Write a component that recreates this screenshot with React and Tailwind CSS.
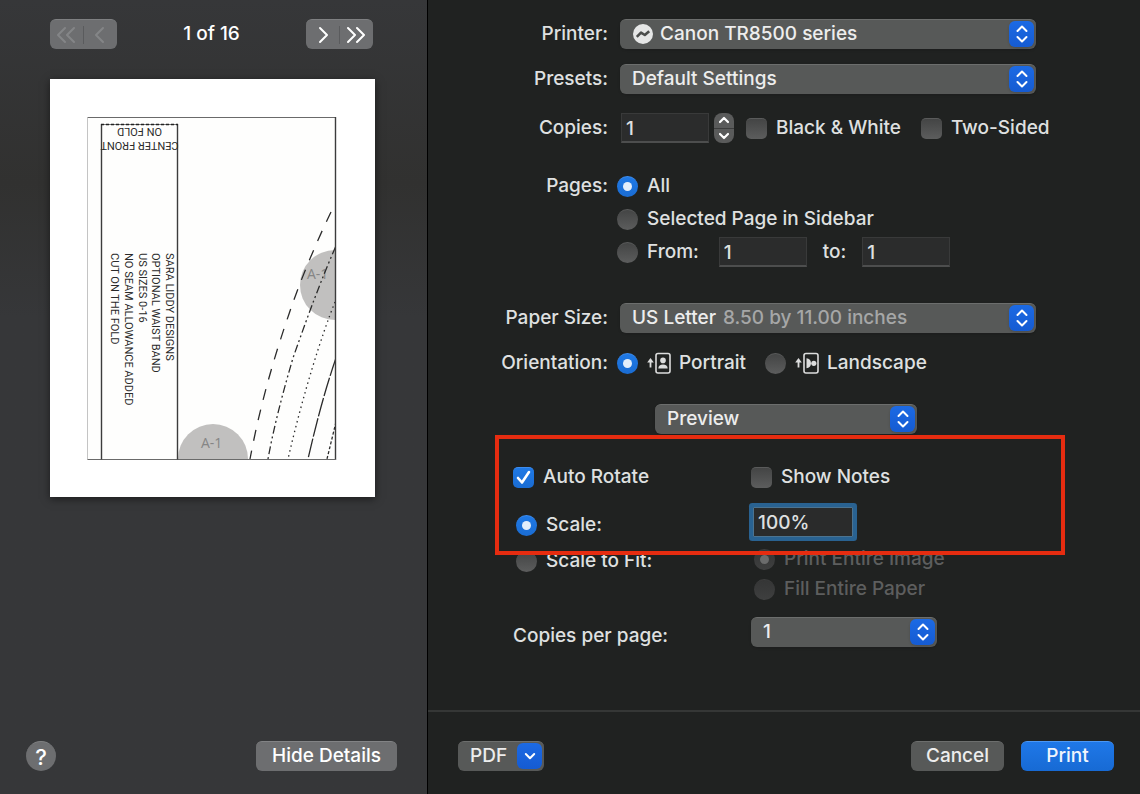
import { useState } from 'react';

function UpDownChip() {
    return (
        <span className="pointer-events-none absolute top-0.5 right-0.5 bottom-0.5 flex w-[25px] items-center justify-center rounded-md bg-linear-to-b from-[#1c6ae4] to-[#155bd2] shadow-sm">
            <svg width="14" height="20" viewBox="0 0 14 20" fill="none" stroke="#fff" strokeWidth="2" strokeLinecap="round" strokeLinejoin="round">
                <path d="M2.5 7 L7 2.5 L11.5 7" />
                <path d="M2.5 13 L7 17.5 L11.5 13" />
            </svg>
        </span>
    );
}

// Native select with the blue chevron chip drawn on top
function PopUp({ id, label, options, className, pad = 'pl-3', children }) {
    return (
        <div className={`relative h-[30px] ${className}`}>
            <select
                id={id}
                aria-label={label}
                className={`h-full w-full appearance-none rounded-md border-t border-[#6c6e6d] bg-[#575958] pb-0.5 ${pad} pr-8 text-[#ededed] shadow outline-none`}
            >
                {options.map((option) => (
                    <option key={option}>{option}</option>
                ))}
            </select>
            {children}
            <UpDownChip />
        </div>
    );
}

function Radio({ name, checked, onChange, disabled, children }) {
    return (
        <label className={`flex h-[30px] items-center gap-[9px] whitespace-nowrap ${disabled ? 'text-[#5d5e5e]' : ''}`}>
            <span className="relative flex size-[21px] shrink-0">
                <input
                    type="radio"
                    name={name}
                    checked={checked}
                    onChange={onChange}
                    disabled={disabled}
                    className="size-[21px] appearance-none rounded-full border-t border-[#5a5b5b] bg-linear-to-b from-[#444545] to-[#5c5d5d] checked:border-[#3d8df0] checked:from-[#1f79e6] checked:to-[#1a6cd2] disabled:border-[#3c3d3d] disabled:from-[#353636] disabled:to-[#3e3f3f]"
                />
                {checked && (
                    <span className={`pointer-events-none absolute inset-0 m-auto size-[9px] rounded-full ${disabled ? 'bg-[#6b6c6c]' : 'bg-[#e3eefb]'}`} />
                )}
            </span>
            {children}
        </label>
    );
}

function Checkbox({ checked, onChange, children }) {
    return (
        <label className="flex h-[30px] items-center gap-[9px] whitespace-nowrap">
            <span className="relative flex size-[21px] shrink-0">
                <input
                    type="checkbox"
                    checked={checked}
                    onChange={onChange}
                    className="size-[21px] appearance-none rounded-[5px] border-t border-[#5a5b5b] bg-linear-to-b from-[#444545] to-[#5c5d5d] checked:border-[#3d8df0] checked:from-[#1f79e6] checked:to-[#1a6cd2]"
                />
                {checked && (
                    <svg className="pointer-events-none absolute inset-0" width="21" height="21" viewBox="0 0 21 21" fill="none" stroke="#fff" strokeWidth="2.6" strokeLinecap="round" strokeLinejoin="round">
                        <path d="M5 11 L9 15.5 L16 5" />
                    </svg>
                )}
            </span>
            {children}
        </label>
    );
}

function NumberField({ label, id }) {
    return (
        <input
            id={id}
            aria-label={label}
            type="text"
            defaultValue="1"
            className="h-[30px] w-[88px] border border-b-2 border-[#393a3a] border-b-[#4d4e4e] bg-[#2b2c2c] px-1 pt-0.5 outline-none"
        />
    );
}

function RowLabel({ htmlFor, children }) {
    return (
        <label htmlFor={htmlFor} className="w-[180px] shrink-0 text-right whitespace-nowrap">
            {children}
        </label>
    );
}

// Sheet icon with an arrow for the feed direction
function SheetIcon({ landscape }) {
    return (
        <svg width="24" height="24" viewBox="0 0 24 24" fill="none" stroke="#dcdddd" className="-mr-px shrink-0">
            <path d="M3.5 16.5 V9.5" strokeWidth="1.8" />
            <path d="M0.2 11.4 L3.5 7 L6.8 11.4 Z" fill="#dcdddd" stroke="none" />
            <rect x="9" y="2.5" width="14" height="19.5" rx="2" strokeWidth="1.6" />
            {landscape ? (
                <g fill="#dcdddd" stroke="none">
                    <path d="M11.5 7.3 C14.3 7.5 16 9.5 16 12.3 C16 15.1 14.3 17.1 11.5 17.3 Z" />
                    <circle cx="18.8" cy="12.3" r="2.6" />
                </g>
            ) : (
                <g fill="#dcdddd" stroke="none">
                    <circle cx="16" cy="9.4" r="2.8" />
                    <path d="M11.3 17.5 C11.3 14.8 13.3 13.4 16 13.4 C18.7 13.4 20.7 14.8 20.7 17.5 Z" />
                </g>
            )}
        </svg>
    );
}

function PagePreview() {
    return (
        <svg viewBox="0 0 325 418" className="block w-full bg-white font-normal shadow-[0_2px_8px_rgba(0,0,0,0.5)]" role="img" aria-label="Page 1 preview">
            <defs>
                <clipPath id="frame">
                    <rect x="37" y="38" width="248.5" height="342.5" />
                </clipPath>
            </defs>
            <rect x="38" y="39" width="248" height="341.5" fill="#fefefd" />
            <g clipPath="url(#frame)" fill="#c1c0bf">
                <circle cx="285" cy="206" r="35" />
                <circle cx="163" cy="380" r="35" />
            </g>
            <g fontFamily="'Open Sans', sans-serif" fontSize="14" fill="#858585">
                <text x="151" y="369">A-1</text>
                <text x="257" y="200">A-1</text>
            </g>

            {/* cutting lines, one dash style per size */}
            <g clipPath="url(#frame)" fill="none" stroke="#2b2b2b" strokeWidth="1.3">
                <path d="M281 133 C266 164 250 202 239 235 C222 284 209 332 200 380" strokeDasharray="11 10" />
                <path d="M285.5 168 C271 201 257 239 243 279 C233 313 224 347 218 380" strokeDasharray="8 3 2 3 2 3" />
                <path d="M285 223 C272 255 253 315 238 380" strokeDasharray="1.5 3.5" />
                <path d="M286 279 C275 311 266 345 258 380" strokeDasharray="19 2" />
                <path d="M286 343 L277 380" strokeDasharray="3 2" />
            </g>

            <g fill="none" stroke="#3c3c3c">
                <path d="M37.5 39 V380.5" stroke="#c4c4c4" strokeWidth="1" />
                <path d="M37.5 38.5 H285.5" stroke="#6a6a6a" strokeWidth="1" />
                <path d="M285.5 38 V381" strokeWidth="1.4" />
                <path d="M37.5 380.5 H286" stroke="#6a6a6a" strokeWidth="1" />
                <path d="M51.5 45 V380.5 M127.5 45 V380.5" strokeWidth="1.4" />
                <path d="M51 45.5 H128" stroke="#777" strokeWidth="1" />
                <path d="M51 45.5 H128" stroke="#222" strokeWidth="1.3" strokeDasharray="3 2" />
            </g>

            <g fontFamily="Roboto, 'Open Sans', sans-serif" fontSize="11" fill="#2a2a2a">
                <g transform="rotate(180 89.5 55)" textAnchor="middle">
                    <text x="89.5" y="61">ON FOLD</text>
                    <text x="89.5" y="47">CENTER FRONT</text>
                </g>
                <g transform="translate(116 174) rotate(90)">
                    <text x="0" y="0">SARA LIDDY DESIGNS</text>
                    <text x="0" y="14">OPTIONAL WAIST BAND</text>
                    <text x="0" y="27">US SIZES 0-16</text>
                    <text x="0" y="41">NO SEAM ALLOWANCE ADDED</text>
                    <text x="0" y="55">CUT ON THE FOLD</text>
                </g>
            </g>
        </svg>
    );
}

function PageNav({ label, disabled, children }) {
    return (
        <button
            aria-label={label}
            disabled={disabled}
            className="flex h-full flex-1 items-center justify-center text-white disabled:text-[#848587]"
        >
            <svg width="20" height="20" viewBox="0 0 20 20" fill="none" stroke="currentColor" strokeWidth="2" strokeLinecap="round" strokeLinejoin="round">
                {children}
            </svg>
        </button>
    );
}

function Sidebar() {
    return (
        <aside className="flex w-[428px] shrink-0 flex-col border-r border-black bg-linear-to-b from-[#363739] via-[#313130] via-23% to-[#363739] to-40%">
            <div className="flex items-center justify-between pt-[19px] pr-[54px] pl-[50px] text-white">
                <div className="flex h-[30px] w-[67px] items-center rounded-md border-t border-[#7f8082] bg-[#6d6e70]">
                    <PageNav label="First page" disabled>
                        <path d="M8 3 L1 10 L8 17 M17 3 L10 10 L17 17" />
                    </PageNav>
                    <span className="h-[18px] w-px bg-[#5a5b5d]" />
                    <PageNav label="Previous page" disabled>
                        <path d="M12 3 L5 10 L12 17" />
                    </PageNav>
                </div>
                <span>1 of 16</span>
                <div className="flex h-[30px] w-[67px] items-center rounded-md border-t border-[#7f8082] bg-[#6d6e70]">
                    <PageNav label="Next page">
                        <path d="M7 3 L14 10 L7 17" />
                    </PageNav>
                    <span className="h-[18px] w-px bg-[#5a5b5d]" />
                    <PageNav label="Last page">
                        <path d="M1 3 L8 10 L1 17 M10 3 L17 10 L10 17" />
                    </PageNav>
                </div>
            </div>

            <div className="pt-[30px] pr-[52px] pl-[50px]">
                <PagePreview />
            </div>

            <div className="mt-auto flex items-center justify-between pr-[30px] pb-[23px] pl-[26px] text-white">
                <button aria-label="Help" className="flex size-[30px] items-center justify-center rounded-full border-t border-[#7f8082] bg-[#6d6e70] text-[22px] font-medium">
                    ?
                </button>
                <button className="h-[30px] w-[141px] rounded-md border-t border-[#828385] bg-[#6d6e70] pb-px">Hide Details</button>
            </div>
        </aside>
    );
}

export default function App() {
    const [pages, setPages] = useState('all');
    const [orientation, setOrientation] = useState('portrait');
    const [scaling, setScaling] = useState('scale');
    const [blackWhite, setBlackWhite] = useState(false);
    const [twoSided, setTwoSided] = useState(false);
    const [autoRotate, setAutoRotate] = useState(true);
    const [showNotes, setShowNotes] = useState(false);

    return (
        <div className="flex min-h-screen bg-[#202221] font-['Inter',sans-serif] text-[19px] leading-6 font-[450] text-[#dfe0e0]">
            <Sidebar />

            <main className="flex min-w-0 flex-1 flex-col pt-[19px]">
                <div className="flex items-center gap-3">
                    <RowLabel htmlFor="printer">Printer:</RowLabel>
                    <PopUp id="printer" options={['Canon TR8500 series']} className="w-[416px]" pad="pl-10">
                        <svg className="pointer-events-none absolute top-[5px] left-[13px]" width="20" height="20" viewBox="0 0 20 20">
                            <circle cx="10" cy="10" r="10" fill="#e6e7e7" />
                            <path d="M3.8 12.8 L8 8.6 L11.8 11 L16.2 7.2" fill="none" stroke="#4b4d4c" strokeWidth="2.6" strokeLinejoin="round" />
                        </svg>
                    </PopUp>
                </div>

                <div className="mt-[15px] flex items-center gap-3">
                    <RowLabel htmlFor="presets">Presets:</RowLabel>
                    <PopUp id="presets" options={['Default Settings']} className="w-[416px]" />
                </div>

                <div className="mt-[19px] flex items-center">
                    <RowLabel htmlFor="copies">Copies:</RowLabel>
                    <div className="ml-[13px] flex items-center">
                        <NumberField id="copies" />
                        <div className="mr-3 ml-[5px] flex h-[30px] w-5 flex-col divide-y divide-[#3c3d3d] overflow-hidden rounded-lg bg-[#5a5b5b]">
                            <button aria-label="More copies" className="flex flex-1 items-center justify-center">
                                <svg width="12" height="8" viewBox="0 0 12 8" fill="none" stroke="#fff" strokeWidth="2.2" strokeLinecap="round" strokeLinejoin="round">
                                    <path d="M2 6 L6 2 L10 6" />
                                </svg>
                            </button>
                            <button aria-label="Fewer copies" className="flex flex-1 items-center justify-center">
                                <svg width="12" height="8" viewBox="0 0 12 8" fill="none" stroke="#fff" strokeWidth="2.2" strokeLinecap="round" strokeLinejoin="round">
                                    <path d="M2 2 L6 6 L10 2" />
                                </svg>
                            </button>
                        </div>
                        <div className="flex gap-5">
                            <Checkbox checked={blackWhite} onChange={() => setBlackWhite(!blackWhite)}>Black &amp; White</Checkbox>
                            <Checkbox checked={twoSided} onChange={() => setTwoSided(!twoSided)}>Two-Sided</Checkbox>
                        </div>
                    </div>
                </div>

                <div className="mt-7 flex items-start gap-[9px]">
                    <span className="w-[180px] shrink-0 text-right leading-[30px]">Pages:</span>
                    <div className="flex flex-col gap-[3px]">
                        <Radio name="pages" checked={pages === 'all'} onChange={() => setPages('all')}>All</Radio>
                        <Radio name="pages" checked={pages === 'selected'} onChange={() => setPages('selected')}>Selected Page in Sidebar</Radio>
                        <div className="flex items-center">
                            <Radio name="pages" checked={pages === 'range'} onChange={() => setPages('range')}>From:</Radio>
                            <div className="ml-5 flex items-center gap-4">
                                <NumberField label="From page" id="from" />
                                <label htmlFor="to">to:</label>
                                <NumberField id="to" />
                            </div>
                        </div>
                    </div>
                </div>

                <div className="mt-9 flex items-center gap-3">
                    <RowLabel htmlFor="paper">Paper Size:</RowLabel>
                    <PopUp id="paper" options={['US Letter']} className="w-[416px]">
                        <span className="pointer-events-none absolute top-[3px] left-[103px] text-[#a6a7a7]">8.50 by 11.00 inches</span>
                    </PopUp>
                </div>

                <div className="mt-[15px] flex items-center gap-[9px]">
                    <span className="w-[180px] shrink-0 text-right">Orientation:</span>
                    <div className="flex gap-[19px]">
                        <Radio name="orientation" checked={orientation === 'portrait'} onChange={() => setOrientation('portrait')}>
                            <SheetIcon />
                            Portrait
                        </Radio>
                        <Radio name="orientation" checked={orientation === 'landscape'} onChange={() => setOrientation('landscape')}>
                            <SheetIcon landscape />
                            Landscape
                        </Radio>
                    </div>
                </div>

                <PopUp label="Options pane" options={['Preview']} className="mt-[26px] ml-[227px] w-[262px]" />

                {/* Preview pane options, with the red call-out box over the first rows */}
                <div className="relative flex pt-7 pl-[85px]">
                    <div className="flex w-[238px] shrink-0 flex-col">
                        <Checkbox checked={autoRotate} onChange={() => setAutoRotate(!autoRotate)}>Auto Rotate</Checkbox>
                        <div className="mt-[18px] flex flex-col gap-1.5 pl-[3px]">
                            <Radio name="scaling" checked={scaling === 'scale'} onChange={() => setScaling('scale')}>Scale:</Radio>
                            <Radio name="scaling" checked={scaling === 'fit'} onChange={() => setScaling('fit')}>Scale to Fit:</Radio>
                        </div>
                        <label htmlFor="per-page" className="mt-12">Copies per page:</label>
                    </div>
                    <div className="flex flex-col items-start">
                        <Checkbox checked={showNotes} onChange={() => setShowNotes(!showNotes)}>Show Notes</Checkbox>
                        <input
                            type="text"
                            aria-label="Scale percent"
                            defaultValue="100%"
                            className="mt-[15px] ml-0.5 h-[30px] w-[100px] rounded-[1px] border border-[#4b7390] bg-[#2a2b2b] px-1 ring-4 ring-[#296291] outline-none"
                        />
                        <div className="mt-[7px] flex flex-col pl-[3px]">
                            <Radio name="fit" checked disabled onChange={() => {}}>Print Entire Image</Radio>
                            <Radio name="fit" checked={false} disabled onChange={() => {}}>Fill Entire Paper</Radio>
                        </div>
                        <PopUp id="per-page" options={['1']} className="mt-[13px] w-[186px]" />
                    </div>
                    <div className="pointer-events-none absolute top-px left-[67px] h-[120px] w-[570px] border-4 border-[#e62c10]" />
                </div>

                <footer className="mt-auto flex items-center justify-between border-t-2 border-[#353736] pt-[29px] pr-[26px] pb-[23px] pl-[30px]">
                    <button className="relative h-[30px] w-[86px] rounded-md border-t border-[#6c6e6d] bg-[#575958] pb-px pl-3 text-left text-[#ededed]">
                        PDF
                        <span className="absolute top-px right-0.5 bottom-0.5 flex w-[25px] items-center justify-center rounded-md bg-linear-to-b from-[#1c6ae4] to-[#155bd2]">
                            <svg width="12" height="8" viewBox="0 0 12 8" fill="none" stroke="#fff" strokeWidth="2" strokeLinecap="round" strokeLinejoin="round">
                                <path d="M1.8 2 L6 6.2 L10.2 2" />
                            </svg>
                        </span>
                    </button>
                    <div className="flex gap-[17px]">
                        <button className="h-[30px] w-[93px] rounded-md border-t border-[#6c6e6d] bg-[#575958] pb-px text-[#ededed]">Cancel</button>
                        <button className="h-[30px] w-[93px] rounded-md border-t border-[#4a97f5] bg-linear-to-b from-[#1f78e8] to-[#176ad4] pb-px text-[#f0f5fc]">Print</button>
                    </div>
                </footer>
            </main>
        </div>
    );
}
